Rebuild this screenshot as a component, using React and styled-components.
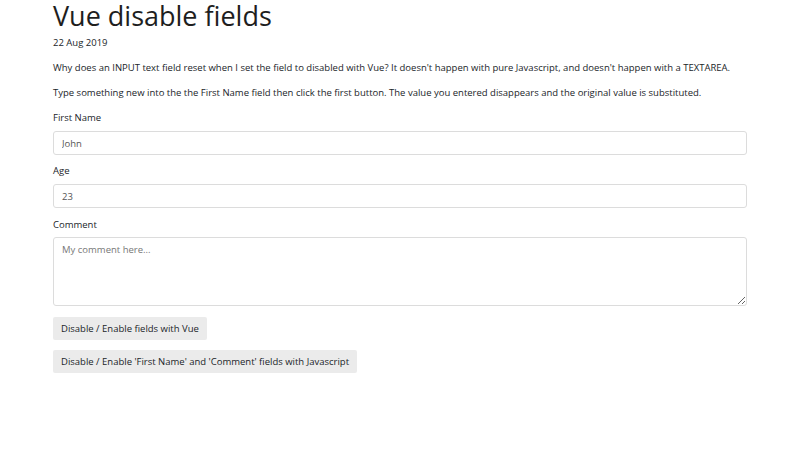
import React from "react";
import styled, { createGlobalStyle } from "styled-components";

const Global = createGlobalStyle`
  body {
    margin: 0;
    background: #fff;
    font-family: "Open Sans", "Noto Sans", sans-serif;
    color: #212529;
  }
`;

const Page = styled.main`
  padding: 0 53px;
  display: flex;
  flex-direction: column;
`;

const Title = styled.h1`
  margin: 0 0 3px;
  font-size: 27px;
  line-height: 32px;
  font-weight: 400;
  color: #1e1e1e;
`;

const Text = styled.p`
  margin: 0 0 ${(p) => p.$gap || 9}px;
  font-size: 9.5px;
  line-height: 16px;
`;

const Label = styled.label`
  display: block;
  font-size: 9.5px;
  line-height: 16px;
  margin-bottom: ${(p) => p.$gap || 5}px;
`;

const Input = styled.input`
  box-sizing: border-box;
  width: 100%;
  height: 24px;
  padding: 0 8px;
  font: inherit;
  font-size: 9.5px;
  color: #555;
  border: 1px solid #dcdcdc;
  border-radius: 3px;
  margin-bottom: ${(p) => p.$gap || 8}px;
`;

const Area = styled.textarea`
  box-sizing: border-box;
  width: 100%;
  height: 69px;
  padding: 5px 8px;
  font: inherit;
  font-size: 9.5px;
  border: 1px solid #dcdcdc;
  border-radius: 3px;
  margin: 0 0 11px;
  display: block;
  &::placeholder {
    color: #777;
  }
`;

const Button = styled.button`
  align-self: flex-start;
  height: 23px;
  padding: 0 8px;
  font: inherit;
  font-size: 9.5px;
  color: #212529;
  background: #ebebeb;
  border: none;
  border-radius: 2px;
  margin-bottom: 10px;
`;

export default function App() {
  return (
    <>
      <Global />
      <Page>
        <Title>Vue disable fields</Title>
        <Text>22 Aug 2019</Text>
        <Text>
          Why does an INPUT text field reset when I set the field to disabled with Vue? It doesn't happen with
          pure Javascript, and doesn't happen with a TEXTAREA.
        </Text>
        <Text>
          Type something new into the the First Name field then click the first button. The value you entered
          disappears and the original value is substituted.
        </Text>
        <Label>First Name</Label>
        <Input defaultValue="John" />
        <Label>Age</Label>
        <Input defaultValue="23" $gap={9} />
        <Label $gap={4}>Comment</Label>
        <Area placeholder="My comment here..." />
        <Button>Disable / Enable fields with Vue</Button>
        <Button>Disable / Enable 'First Name' and 'Comment' fields with Javascript</Button>
      </Page>
    </>
  );
}
